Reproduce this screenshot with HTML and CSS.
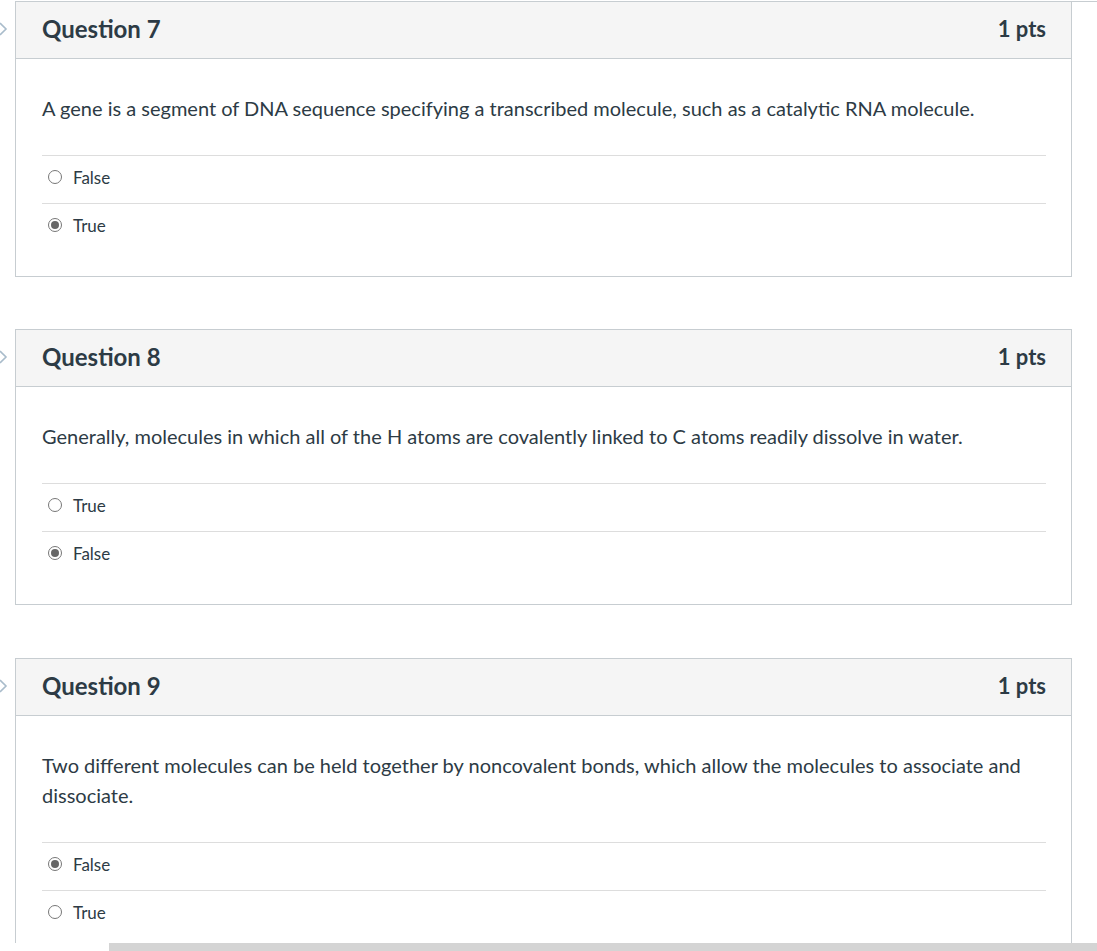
FILE: index.html
```html
<!DOCTYPE html>
<html lang="en">
<head>
<meta charset="utf-8">
<title>Quiz</title>
<link rel="stylesheet" href="styles.css">
</head>
<body>
<div class="page">
  <div class="card first">
    <svg class="chev" width="8" height="14" viewBox="0 0 8 14"><polyline points="0,1 6,7 0,13" fill="none" stroke="#a9bccb" stroke-width="1.6"/></svg>
    <div class="head"><span class="title">Question 7</span><span class="pts">1 pts</span></div>
    <div class="body">
      <p class="qtext">A gene is a segment of DNA sequence specifying a transcribed molecule, such as a catalytic RNA molecule.</p>
      <ul class="answers">
        <li><span class="radio"></span><span class="label">False</span></li>
        <li><span class="radio on"></span><span class="label">True</span></li>
      </ul>
    </div>
  </div>
  <div class="card">
    <svg class="chev" width="8" height="14" viewBox="0 0 8 14"><polyline points="0,1 6,7 0,13" fill="none" stroke="#a9bccb" stroke-width="1.6"/></svg>
    <div class="head"><span class="title">Question 8</span><span class="pts">1 pts</span></div>
    <div class="body">
      <p class="qtext">Generally, molecules in which all of the H atoms are covalently linked to C atoms readily dissolve in water.</p>
      <ul class="answers">
        <li><span class="radio"></span><span class="label">True</span></li>
        <li><span class="radio on"></span><span class="label">False</span></li>
      </ul>
    </div>
  </div>
  <div class="card last">
    <svg class="chev" width="8" height="14" viewBox="0 0 8 14"><polyline points="0,1 6,7 0,13" fill="none" stroke="#a9bccb" stroke-width="1.6"/></svg>
    <div class="head"><span class="title">Question 9</span><span class="pts">1 pts</span></div>
    <div class="body">
      <p class="qtext">Two different molecules can be held together by noncovalent bonds, which allow the molecules to associate and dissociate.</p>
      <ul class="answers">
        <li><span class="radio on"></span><span class="label">False</span></li>
        <li><span class="radio"></span><span class="label">True</span></li>
      </ul>
    </div>
  </div>
</div>
<div class="hscroll"><div class="thumb"></div></div>
</body>
</html>
```
FILE: styles.css
```css
html, body {
  margin: 0;
  padding: 0;
  height: 100%;
  overflow: hidden;
  background: #fff;
}
body {
  font-family: Lato, "Open Sans", sans-serif;
  color: #2d3b45;
  padding-top: 1px;
  box-sizing: border-box;
}
.page {
  margin-left: 15px;
  border-top: 1px solid #c7cdd1;
}
.card {
  position: relative;
  width: 1057px;
  box-sizing: border-box;
  border: 1px solid #c7cdd1;
  margin-top: 52px;
}
.card.first {
  border-top: 0;
  margin-top: 0;
}
.card.last {
  margin-top: 53px;
}
.chev {
  position: absolute;
  left: -16px;
  top: 20px;
}
.head {
  height: 57px;
  box-sizing: border-box;
  background: #f5f5f5;
  border-bottom: 1px solid #c7cdd1;
  display: flex;
  align-items: center;
  justify-content: space-between;
  padding: 0 25px 4px 26px;
  font-weight: 700;
}
.title {
  font-size: 24px;
}
.pts {
  font-size: 22px;
}
.body {
  padding: 34px 25px 25px 26px;
}
.qtext {
  margin: 0;
  font-size: 20px;
  line-height: 30px;
}
.answers {
  list-style: none;
  margin: 32px 0 0;
  padding: 0;
}
.answers li {
  height: 47px;
  border-top: 1px solid #dddddd;
  display: flex;
  align-items: center;
  padding-left: 6px;
  font-size: 17px;
}
.radio {
  width: 14px;
  height: 14px;
  box-sizing: border-box;
  border: 1px solid #777;
  border-radius: 50%;
  margin-right: 11px;
  margin-top: -5px;
  position: relative;
  flex: none;
}
.radio.on::after {
  content: "";
  position: absolute;
  left: 2px;
  top: 2px;
  width: 8px;
  height: 8px;
  border-radius: 50%;
  background: #666;
}
.label {
  margin-top: -5px;
}
.hscroll {
  position: fixed;
  left: 0;
  right: 0;
  bottom: 0;
  height: 8px;
  background: #fff;
}
.thumb {
  margin-left: 109px;
  height: 8px;
  background: #d4d4d4;
}
```
